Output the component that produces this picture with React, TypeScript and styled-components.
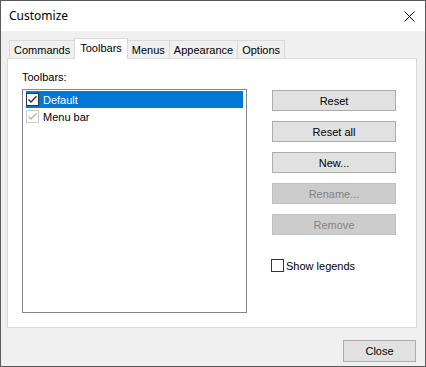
import React, { useState } from "react";
import styled, { createGlobalStyle } from "styled-components";

const GlobalStyle = createGlobalStyle`
  html, body {
    margin: 0;
    padding: 0;
    background: #ffffff;
  }
  * {
    box-sizing: border-box;
  }
`;

const tabs = ["Commands", "Toolbars", "Menus", "Appearance", "Options"];

const toolbars = [
  { name: "Default", checked: true, disabled: false },
  { name: "Menu bar", checked: true, disabled: true },
];

const actions = [
  { label: "Reset", disabled: false },
  { label: "Reset all", disabled: false },
  { label: "New...", disabled: false },
  { label: "Rename...", disabled: true },
  { label: "Remove", disabled: true },
];

function CheckBox({ checked, disabled }: { checked: boolean; disabled?: boolean }) {
  return (
    <Box disabled={disabled}>
      {checked && (
        <svg width="11" height="11" viewBox="0 0 11 11">
          <polyline
            points="1.5,5.5 4,8 9.5,2.2"
            fill="none"
            stroke={disabled ? "#b4b4b4" : "#333333"}
            strokeWidth="1.3"
          />
        </svg>
      )}
    </Box>
  );
}

function App() {
  const [active, setActive] = useState<string>("Toolbars");
  const [selected, setSelected] = useState<number>(0);
  const [legends, setLegends] = useState<boolean>(false);

  return (
    <>
      <GlobalStyle />
      <Window>
        <TitleBar>
          <Title>Customize</Title>
          <CloseX>
            <svg width="11" height="11" viewBox="0 0 11 11">
              <path d="M0.5 0.5 L10.5 10.5 M10.5 0.5 L0.5 10.5" stroke="#000" strokeWidth="1" />
            </svg>
          </CloseX>
        </TitleBar>
        <Body>
          <TabRow>
            {tabs.map((t) => (
              <Tab key={t} active={t === active} onClick={() => setActive(t)}>
                {t}
              </Tab>
            ))}
          </TabRow>
          <Panel>
            <LeftCol>
              <Label>Toolbars:</Label>
              <ListBox>
                {toolbars.map((tb, i) => (
                  <ListRow key={tb.name} selected={i === selected} onClick={() => setSelected(i)}>
                    <CheckBox checked={tb.checked} disabled={tb.disabled} />
                    <span>{tb.name}</span>
                  </ListRow>
                ))}
              </ListBox>
            </LeftCol>
            <RightCol>
              {actions.map((a) => (
                <Button key={a.label} disabled={a.disabled}>
                  {a.label}
                </Button>
              ))}
              <Legends onClick={() => setLegends(!legends)}>
                <CheckBox checked={legends} />
                <span>Show legends</span>
              </Legends>
            </RightCol>
          </Panel>
          <Footer>
            <CloseButton>Close</CloseButton>
          </Footer>
        </Body>
      </Window>
    </>
  );
}

const Window = styled.div`
  width: 426px;
  height: 367px;
  border: 1px solid #5a5a5a;
  display: flex;
  flex-direction: column;
  font-family: "Liberation Sans", Arial, sans-serif;
  font-size: 11px;
  color: #000;
`;

const TitleBar = styled.div`
  height: 30px;
  flex-shrink: 0;
  background: #ffffff;
  display: flex;
  align-items: center;
  justify-content: space-between;
  padding: 0 10px 0 8px;
`;

const Title = styled.div`
  font-family: "Noto Sans", "Open Sans", sans-serif;
  font-size: 12px;
  color: #000;
  margin-top: -1px;
`;

const CloseX = styled.div`
  width: 11px;
  height: 11px;
  display: flex;
  margin-top: 1px;
`;

const Body = styled.div`
  flex: 1;
  background: #f0f0f0;
  padding: 7px 8px 4px 6px;
  display: flex;
  flex-direction: column;
`;

const TabRow = styled.div`
  height: 20px;
  display: flex;
  align-items: flex-end;
  padding-left: 2px;
`;

const Tab = styled.div<{ active: boolean }>`
  position: relative;
  height: ${(p) => (p.active ? "21px" : "18px")};
  margin-bottom: ${(p) => (p.active ? "-1px" : "0")};
  margin-left: -1px;
  padding: ${(p) => (p.active ? "0 5px" : "0 4px")};
  padding-bottom: ${(p) => (p.active ? "3px" : "0")};
  z-index: ${(p) => (p.active ? 1 : 0)};
  background: ${(p) => (p.active ? "#ffffff" : "#f0f0f0")};
  border: 1px solid #d9d9d9;
  border-bottom: none;
  display: flex;
  align-items: center;
  white-space: nowrap;
  cursor: default;
  &:first-child {
    margin-left: 0;
  }
`;

const Panel = styled.div`
  height: 270px;
  flex-shrink: 0;
  background: #ffffff;
  border: 1px solid #d9d9d9;
  display: flex;
  padding: 12px 0 0 14px;
`;

const LeftCol = styled.div`
  width: 225px;
  display: flex;
  flex-direction: column;
`;

const Label = styled.div`
  height: 13px;
  line-height: 13px;
  margin-bottom: 5px;
`;

const ListBox = styled.div`
  height: 224px;
  border: 1px solid #828790;
  background: #ffffff;
  padding: 1px 3px;
`;

const ListRow = styled.div<{ selected: boolean }>`
  height: 17px;
  display: flex;
  align-items: center;
  gap: 4px;
  background: ${(p) => (p.selected ? "#0078d7" : "transparent")};
  color: ${(p) => (p.selected ? "#ffffff" : "#000000")};
  padding-left: 0;
  cursor: default;
`;

const Box = styled.div<{ disabled?: boolean }>`
  width: 13px;
  height: 13px;
  flex-shrink: 0;
  background: #ffffff;
  border: 1px solid ${(p) => (p.disabled ? "#cccccc" : "#333333")};
  display: flex;
  align-items: center;
  justify-content: center;
`;

const RightCol = styled.div`
  margin-left: 25px;
  margin-top: 19px;
  width: 124px;
  display: flex;
  flex-direction: column;
  gap: 10px;
`;

const Button = styled.button`
  height: 21px;
  width: 124px;
  border: 1px solid #adadad;
  background: #e1e1e1;
  font-family: "Liberation Sans", Arial, sans-serif;
  font-size: 11px;
  color: #000;
  padding: 0;
  &:disabled {
    border-color: #bfbfbf;
    background: #cccccc;
    color: #838383;
  }
`;

const Legends = styled.div`
  margin-top: 14px;
  margin-left: -1px;
  display: flex;
  align-items: center;
  gap: 2px;
  cursor: default;
`;

const Footer = styled.div`
  flex: 1;
  display: flex;
  align-items: flex-end;
  justify-content: flex-end;
  padding-right: 1px;
`;

const CloseButton = styled(Button)`
  width: 73px;
  height: 22px;
`;

export default App;
